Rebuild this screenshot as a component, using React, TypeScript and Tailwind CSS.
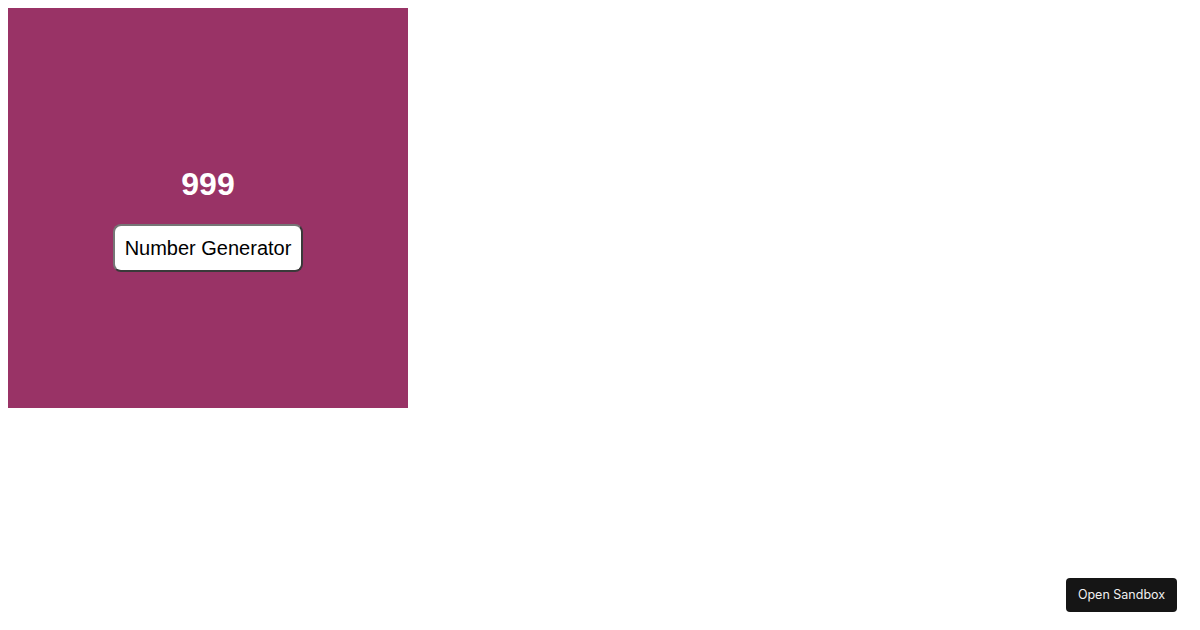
export default function App() {
  return (
    <div className="min-h-screen bg-white p-2 font-['Liberation_Sans',Arial,sans-serif]">
      <div className="flex h-[400px] w-[400px] flex-col items-center justify-center bg-[#993366] pt-[22px]">
        <h1 className="mb-[21px] text-[32px] font-bold leading-[37px] text-white">999</h1>
        <button
          type="button"
          className="rounded-lg border-2 border-b-[#3a3a3a] border-l-[#767676] border-r-[#3a3a3a] border-t-[#767676] bg-white px-[10px] py-[10px] text-[20px] leading-[24px] text-black"
        >
          Number Generator
        </button>
      </div>
      <a
        href="#"
        className="fixed bottom-[18px] right-[23px] flex h-[34px] w-[111px] items-center justify-center rounded-[4px] bg-[#151515] font-['Inter',sans-serif] text-[12.5px] text-[#f0f0f0]"
      >
        Open Sandbox
      </a>
    </div>
  )
}
